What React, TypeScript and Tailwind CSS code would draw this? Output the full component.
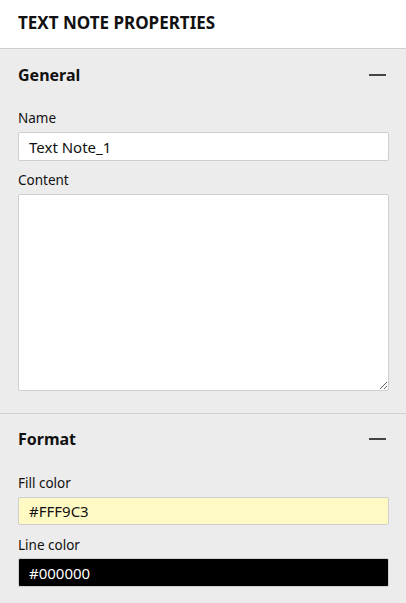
import React from "react";

const font = { fontFamily: '"Noto Sans", "Open Sans", sans-serif' };

function Minus() {
    return <span className="block h-[2px] w-[17px] bg-[#444]" />;
}

function SectionHead({ title, h }: { title: string; h: string }) {
    return (
        <div className={`flex items-center justify-between pl-[18px] pr-[20px] ${h}`}>
            <span className="text-[16px] font-bold text-[#111]">{title}</span>
            <Minus />
        </div>
    );
}

export default function App() {
    return (
        <div className="w-[406px] h-[603px] bg-[#ececec] overflow-hidden text-[#111]" style={font}>
            <div className="h-[49px] bg-white border-b border-[#cfcfcf] flex items-center px-[18px]">
                <span className="text-[17px] font-bold uppercase text-[#111] -mt-[3px]">Text Note Properties</span>
            </div>

            {/* General */}
            <div>
                <div className="h-[52px] flex items-center justify-between pl-[18px] pr-[20px]">
                    <span className="text-[16px] font-bold">General</span>
                    <Minus />
                </div>
                <div className="pl-[18px] pr-[17px] pt-[7px] pb-[22px] flex flex-col">
                    <label className="text-[13.5px] leading-[20px] mb-[4px]">Name</label>
                    <input
                        defaultValue="Text Note_1"
                        className="h-[29px] w-full bg-white border border-[#cfcfcf] rounded-[2px] px-[10px] text-[15px] outline-none"
                        style={font}
                    />
                    <label className="text-[13.5px] leading-[20px] mt-[9px] mb-[4px]">Content</label>
                    <textarea
                        className="h-[197px] w-full bg-white border border-[#cfcfcf] rounded-[2px] px-[10px] py-[4px] text-[15px] outline-none block"
                        style={font}
                    />
                </div>
            </div>

            {/* Format */}
            <div className="border-t border-[#cfcfcf]">
                <SectionHead title="Format" h="h-[50px]" />
                <div className="pl-[18px] pr-[17px] pt-[9px] flex flex-col">
                    <label className="text-[13.5px] leading-[20px] mb-[4px]">Fill color</label>
                    <input
                        defaultValue="#FFF9C3"
                        className="h-[28px] w-full bg-[#fff9c3] border border-[#cfcfcf] rounded-[2px] px-[10px] text-[15px] text-[#111] outline-none"
                        style={font}
                    />
                    <label className="text-[13.5px] leading-[20px] mt-[10px] mb-[3px]">Line color</label>
                    <input
                        defaultValue="#000000"
                        className="h-[29px] w-full bg-black border border-[#cfcfcf] rounded-[2px] px-[10px] text-[15px] text-white outline-none"
                        style={font}
                    />
                </div>
            </div>
        </div>
    );
}
